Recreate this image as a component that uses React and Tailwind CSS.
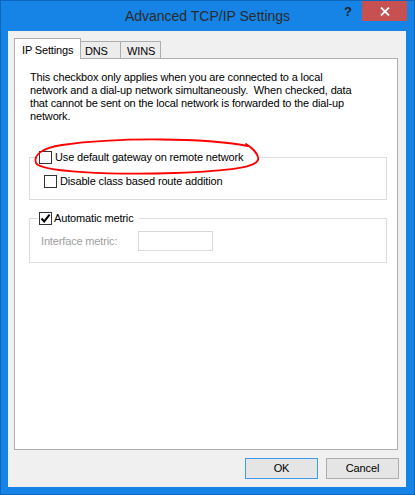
import React from 'react';

const font = { fontFamily: '"Liberation Sans", Arial, sans-serif' };

function Box({ checked }) {
  return (
    <span className="w-[13px] h-[13px] border border-[#333333] bg-white flex items-center justify-center shrink-0">
      {checked && (
        <svg width="11" height="11" viewBox="0 0 11 11">
          <path d="M1.5 5.5 L4.2 8.4 L9.6 1.6" fill="none" stroke="#000" strokeWidth="2" />
        </svg>
      )}
    </span>
  );
}

function Check({ label, checked, gap = 'gap-[3px]' }) {
  return (
    <label className={`flex items-center ${gap} h-[13px] text-[11px] tracking-[-0.15px] text-black leading-[13px]`}>
      <Box checked={checked} />
      <span>{label}</span>
    </label>
  );
}

export default function App() {
  return (
    <div
      className="relative w-[415px] h-[495px] bg-[#1584e6] border border-[#0c66bd] flex flex-col select-none"
      style={font}
    >
      {/* Title bar */}
      <div className="h-[30px] grid grid-cols-[1fr_auto_1fr] items-start">
        <div />
        <div className="h-[30px] flex items-center text-[14px] text-[#2b2b2b] pt-[1px]">Advanced TCP/IP Settings</div>
        <div className="flex justify-end items-start gap-[10px] pr-[7px]">
          <span className="h-[22px] flex items-center text-[13px] font-bold text-[#222]">?</span>
          <button className="w-[45px] h-[20px] bg-[#c75050] flex items-center justify-center">
            <svg width="10" height="9" viewBox="0 0 10 9">
              <path d="M1 0.5 L9 8.5 M9 0.5 L1 8.5" stroke="#fff" strokeWidth="1.8" />
            </svg>
          </button>
        </div>
      </div>

      {/* Client area */}
      <div className="flex-1 flex flex-col ml-[7px] mr-[8px] mb-[7px] bg-[#f0f0f0] pt-[7px] pl-[6px] pr-[7px] pb-[8px] tracking-[-0.15px]">
        {/* Tabs */}
        <div className="h-[20px] flex items-end text-[11px] text-black">
          <div className="relative z-10 w-[67px] h-[21px] -mb-px bg-white border border-b-0 border-[#adadad] flex items-start pl-[7px] pt-[3px]">
            IP Settings
          </div>
          <div className="w-[41px] h-[17px] -ml-px bg-[#ececec] border border-b-0 border-[#adadad] flex items-start pl-[4px] pt-[1px]">
            DNS
          </div>
          <div className="w-[41px] h-[17px] -ml-px bg-[#ececec] border border-b-0 border-[#adadad] flex items-start pl-[6px] pt-[1px]">
            WINS
          </div>
        </div>

        {/* Panel */}
        <div className="flex-1 mr-[1px] bg-white border border-[#adadad] pl-[14px] pt-[12px]">
          <p className="ml-[1px] text-[11px] leading-[13px] text-black whitespace-pre">
            {'This checkbox only applies when you are connected to a local\nnetwork and a dial-up network simultaneously.  When checked, data\nthat cannot be sent on the local network is forwarded to the dial-up\nnetwork.'}
          </p>

          <fieldset className="mt-[28px] w-[358px] border border-[#dcdcdc] pl-[8px] pb-[11px]">
            <legend className="px-[1px] pr-[16px]">
              <Check label="Use default gateway on remote network" />
            </legend>
            <div className="pl-[6px] pt-[11px]">
              <Check label="Disable class based route addition" />
            </div>
          </fieldset>

          <fieldset className="mt-[12px] w-[358px] border border-[#dcdcdc] pl-[8px] pb-[11px]">
            <legend className="px-[1px] pr-[5px]">
              <Check label="Automatic metric" checked gap="gap-[2px]" />
            </legend>
            <div className="pl-[3px] pt-[6px] flex items-center">
              <span className="w-[97px] text-[11px] text-[#a0a0a0]">Interface metric:</span>
              <div className="w-[75px] h-[20px] border border-[#d9d9d9] bg-white" />
            </div>
          </fieldset>
        </div>

        {/* Buttons */}
        <div className="mt-[8px] flex justify-end gap-[8px] text-[11px] text-black">
          <button className="w-[73px] h-[21px] border border-[#3c9bea] bg-[#e5e5e5] flex items-center justify-center">OK</button>
          <button className="w-[73px] h-[21px] border border-[#adadad] bg-[#e5e5e5] flex items-center justify-center">Cancel</button>
        </div>
      </div>

      {/* Red hand-drawn annotation */}
      <svg className="absolute -left-px -top-px pointer-events-none" width="415" height="495" viewBox="0 0 415 495">
        <path
          d="M248 146 C 205 138, 120 137, 62 145 C 42 148, 33 155, 36 163 C 41 172, 110 175, 175 173 C 225 171, 262 168, 258 157 C 256 151, 252 148, 246 144"
          fill="none"
          stroke="#ff0000"
          strokeWidth="1.8"
          strokeLinecap="round"
        />
      </svg>
    </div>
  );
}
